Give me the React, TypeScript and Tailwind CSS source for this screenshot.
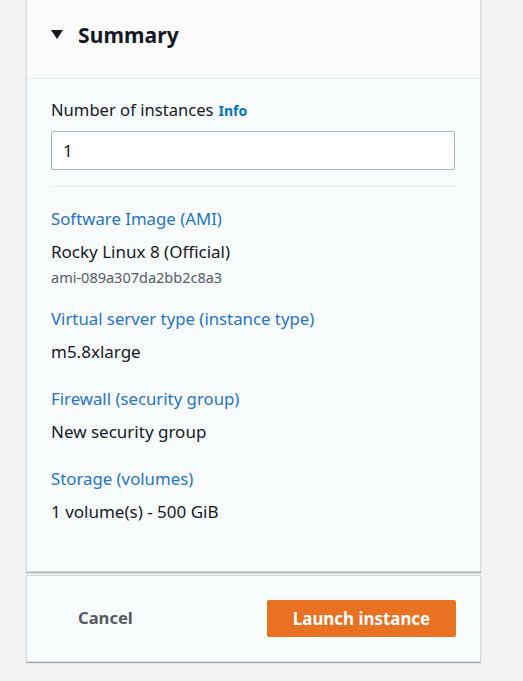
import React from 'react'

const font = { fontFamily: '"Noto Sans", "Open Sans", Arial, sans-serif' }

interface SummaryItem {
  label: string
  value: string
  sub?: string
}

const items: SummaryItem[] = [
  { label: 'Software Image (AMI)', value: 'Rocky Linux 8 (Official)', sub: 'ami-089a307da2bb2c8a3' },
  { label: 'Virtual server type (instance type)', value: 'm5.8xlarge' },
  { label: 'Firewall (security group)', value: 'New security group' },
  { label: 'Storage (volumes)', value: '1 volume(s) - 500 GiB' },
]

export default function App() {
  return (
    <div className="min-h-screen bg-[#f2f3f3] text-[#16191f]" style={font}>
      <div className="ml-[26px] w-[455px]">
        {/* Summary panel */}
        <div className="border-x border-b border-[#d5dbdb] bg-[#f8fbfc] shadow-[0_1px_1px_0_rgba(0,28,36,0.3)]">
          <div className="h-[79px] bg-[#fafafa] border-b border-[#eaeded] px-[24px] flex items-center pb-[8px]">
            <svg width="12" height="10" viewBox="0 0 12 10" className="mr-[15px]">
              <path d="M0 0 L12 0 L6 9 Z" fill="#16191f" />
            </svg>
            <h2 className="text-[21px] font-bold leading-[28px] tracking-[0.1px]">Summary</h2>
          </div>

          <div className="px-[24px] pt-[20px] pb-[47px]">
            <div className="flex items-baseline gap-[5px] text-[16.6px] leading-[22px]">
              <span>Number of instances</span>
              <span className="text-[14px] font-bold text-[#0073bb]">Info</span>
            </div>
            <input
              type="text"
              defaultValue="1"
              className="mt-[9px] w-[404px] h-[39px] rounded-[2px] border border-[#aab7b8] bg-white px-[11px] text-[17px] text-[#16191f] outline-none"
              style={font}
            />
            <div className="mt-[16px] w-[404px] border-t border-[#eaeded]" />

            <div className="mt-[20px] flex flex-col gap-[23px]">
              {items.map(item => (
                <div key={item.label} className="flex flex-col">
                  <span className="text-[16.8px] leading-[24px] text-[#2874bc]">{item.label}</span>
                  <span className="mt-[9px] text-[17px] leading-[24px]">{item.value}</span>
                  {item.sub && (
                    <span className="mt-[3px] -mb-[3px] text-[14.5px] leading-[20px] text-[#545b64]">{item.sub}</span>
                  )}
                </div>
              ))}
            </div>
          </div>
        </div>

        {/* Actions */}
        <div className="mt-[3px] h-[87px] border border-[#d5dbdb] bg-[#f8fbfc] shadow-[0_1px_1px_0_rgba(0,28,36,0.3)] flex items-center justify-between pl-[51px] pr-[24px]">
          <button className="text-[16.6px] font-bold text-[#545b64]" style={font}>Cancel</button>
          <button
            className="w-[189px] h-[37px] rounded-[2px] bg-[#e87221] text-white text-[16.9px] font-bold"
            style={font}
          >
            Launch instance
          </button>
        </div>
      </div>
    </div>
  )
}
